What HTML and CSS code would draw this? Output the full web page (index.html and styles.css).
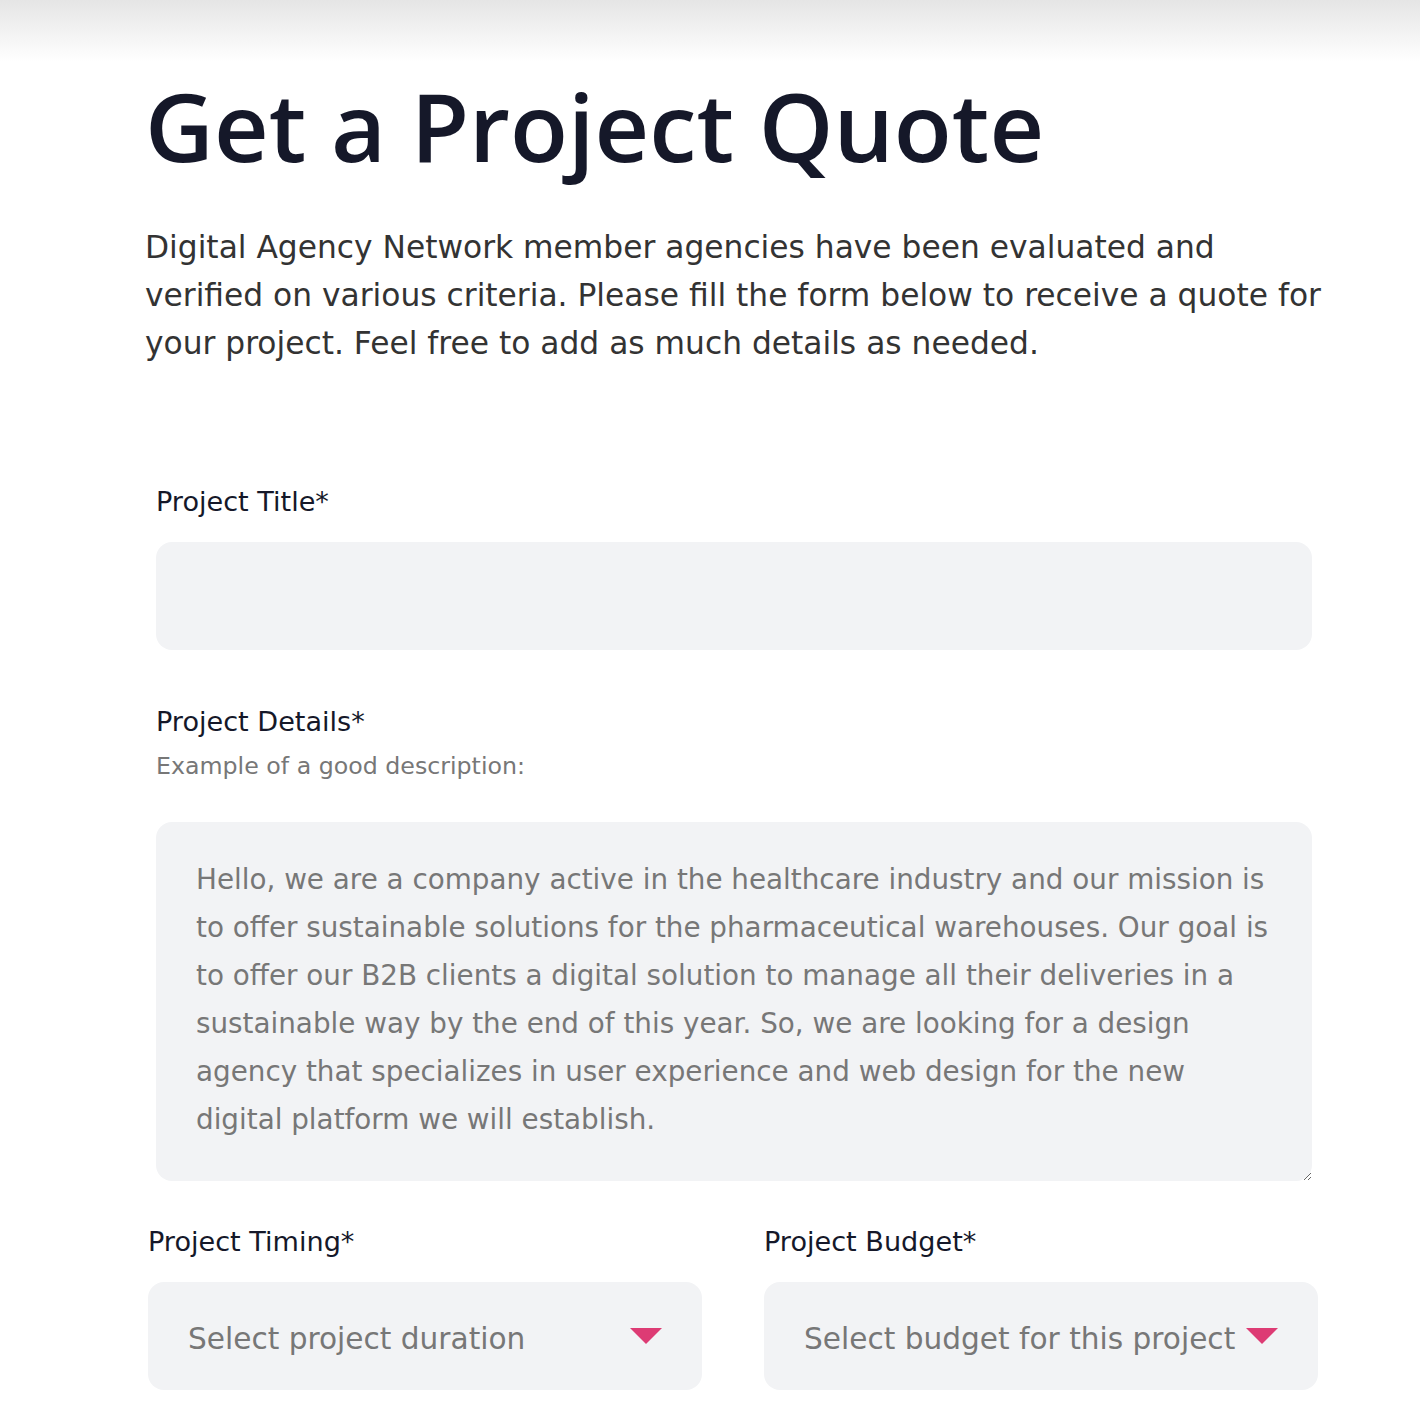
FILE: index.html
```html
<!DOCTYPE html>
<html>
<head>
  <title>Get a Project Quote</title>
  <link rel="stylesheet" href="styles.css">
</head>
<body>
  <main class="page">
    <h1>Get a Project Quote</h1>
    <p class="intro">Digital Agency Network member agencies have been evaluated and verified on various criteria. Please fill the form below to receive a quote for your project. Feel free to add as much details as needed.</p>

    <form class="quote-form" action="#" method="POST">
      <div class="field">
        <label for="project-title">Project Title*</label>
        <input type="text" id="project-title" name="project-title" required>
      </div>

      <div class="field field-details">
        <label for="project-details">Project Details*</label>
        <span class="hint">Example of a good description:</span>
        <textarea id="project-details" name="project-details" required placeholder="Hello, we are a company active in the healthcare industry and our mission is to offer sustainable solutions for the pharmaceutical warehouses. Our goal is to offer our B2B clients a digital solution to manage all their deliveries in a sustainable way by the end of this year. So, we are looking for a design agency that specializes in user experience and web design for the new digital platform we will establish."></textarea>
      </div>

      <div class="field-row">
        <div class="field">
          <label for="project-timing">Project Timing*</label>
          <div class="select-wrap">
            <select id="project-timing" name="project-timing" required>
              <option value="" selected disabled hidden>Select project duration</option>
              <option value="1">Less than 1 month</option>
              <option value="3">1 - 3 months</option>
              <option value="6">3 - 6 months</option>
              <option value="12">More than 6 months</option>
            </select>
            <svg class="caret" width="32" height="16" viewBox="0 0 32 16"><polygon points="0,0 32,0 16,16"/></svg>
          </div>
        </div>
        <div class="field">
          <label for="project-budget">Project Budget*</label>
          <div class="select-wrap">
            <select id="project-budget" name="project-budget" required>
              <option value="" selected disabled hidden>Select budget for this project</option>
              <option value="5k">Less than $5,000</option>
              <option value="10k">$5,000 - $10,000</option>
              <option value="25k">$10,000 - $25,000</option>
              <option value="50k">More than $25,000</option>
            </select>
            <svg class="caret" width="32" height="16" viewBox="0 0 32 16"><polygon points="0,0 32,0 16,16"/></svg>
          </div>
        </div>
      </div>
    </form>
  </main>
</body>
</html>
```
FILE: styles.css
```css
/* Quote page */

body {
  margin: 0;
  font-family: "DejaVu Sans", sans-serif;
  color: #333;
  background: #fff linear-gradient(#e5e5e5, #fff 62px) no-repeat;
}

.page {
  width: 1185px;
  margin-left: 145px;
  padding-top: 68px;
}

h1 {
  margin: 0;
  font-family: "Open Sans", sans-serif;
  font-weight: 600;
  font-size: 95px;
  line-height: 1.2;
  color: #151829;
}

.intro {
  margin: 41px 0 0;
  font-size: 31.3px;
  line-height: 48px;
  color: #333;
}

.quote-form {
  width: 1170px;
  margin: 115px 0 0 3px;
}

.field label {
  display: block;
  font-size: 27.1px;
  line-height: 40px;
  color: #151829;
}

.quote-form > .field {
  margin: 0 6px 0 8px;
}

.field input[type="text"] {
  display: block;
  box-sizing: border-box;
  width: 100%;
  height: 108px;
  margin-top: 20px;
  padding: 0 40px;
  border: none;
  border-radius: 16px;
  background-color: #f2f3f5;
  font-family: inherit;
  font-size: 27.8px;
  color: #333;
}

.quote-form > .field-details {
  margin-top: 52px;
}

.hint {
  display: block;
  margin-top: 8px;
  font-size: 23.7px;
  line-height: 32px;
  color: #777;
}

.field textarea {
  display: block;
  box-sizing: border-box;
  width: 100%;
  height: 359px;
  margin-top: 40px;
  padding: 34px 40px;
  border: none;
  border-radius: 16px;
  background-color: #f2f3f5;
  font-family: inherit;
  font-size: 27.8px;
  line-height: 48px;
  color: #333;
}

.field textarea::placeholder {
  color: #777;
  opacity: 1;
}

input:focus,
textarea:focus,
select:focus {
  outline: none;
}

.field-row {
  display: grid;
  grid-template-columns: 1fr 1fr;
  column-gap: 62px;
  margin-top: 41px;
}

.select-wrap {
  position: relative;
  margin-top: 20px;
}

.select-wrap select {
  display: block;
  box-sizing: border-box;
  width: 100%;
  height: 108px;
  padding: 5px 80px 0 40px;
  border: none;
  border-radius: 16px;
  background-color: #f2f3f5;
  font-family: inherit;
  font-size: 29.6px;
  color: #777;
  appearance: none;
  -webkit-appearance: none;
  cursor: pointer;
}

.caret {
  position: absolute;
  right: 40px;
  top: 46px;
  fill: #dd3b74;
  pointer-events: none;
}
```
